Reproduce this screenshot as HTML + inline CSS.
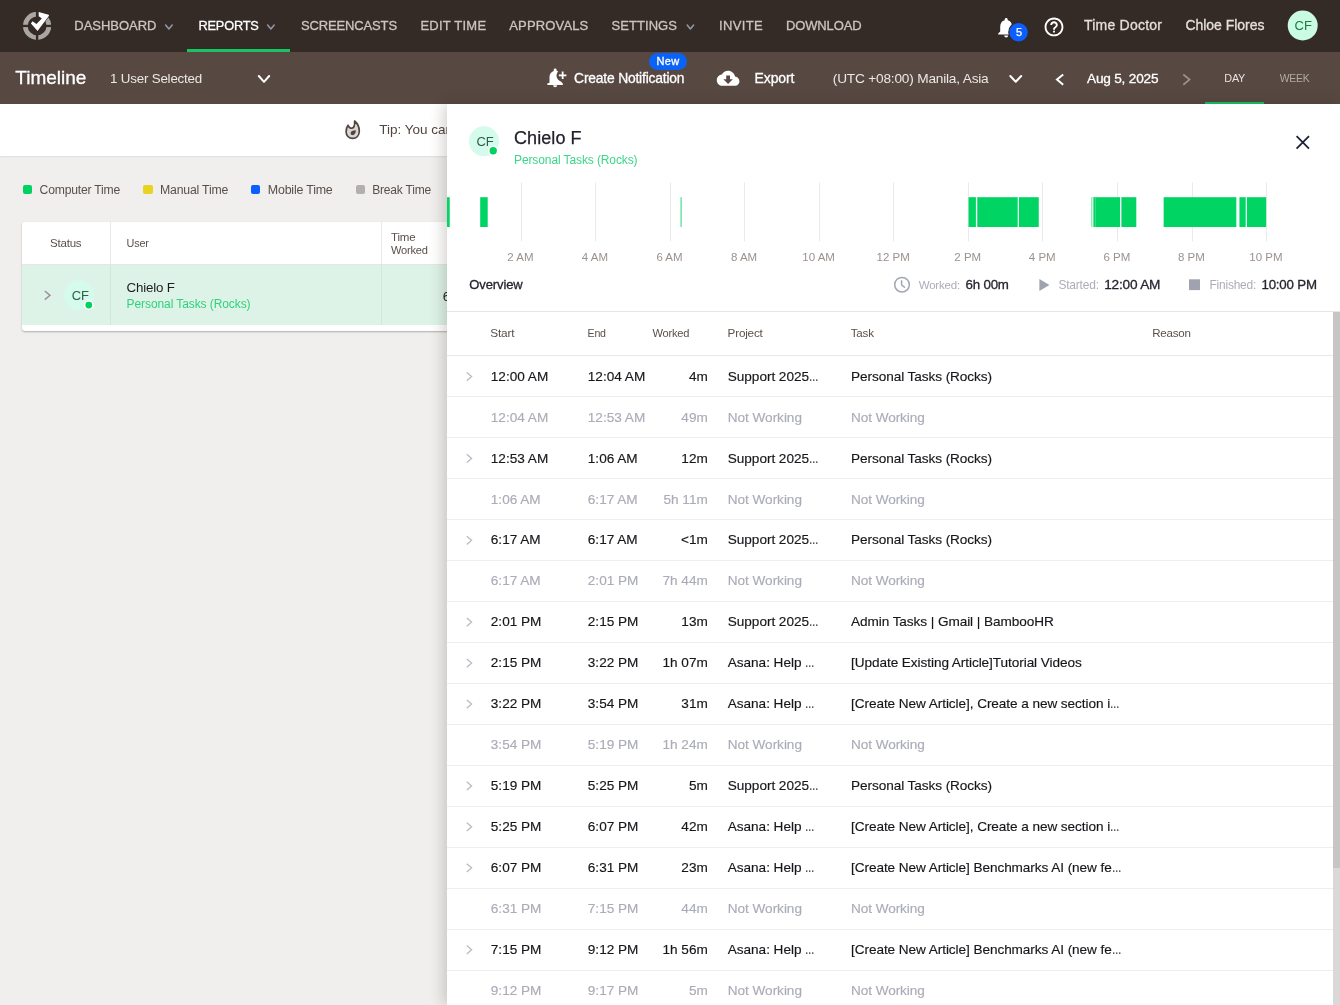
<!DOCTYPE html>
<html><head><meta charset="utf-8"><style>
html,body{margin:0;padding:0}
body{width:1340px;height:1005px;overflow:hidden;position:relative;background:#f0efed;font-family:"Liberation Sans",sans-serif}
#root{position:absolute;left:0;top:0;width:1340px;height:1005px;will-change:transform}
.t{position:absolute;white-space:nowrap}
.el{display:inline-block;transform:scaleX(.7);transform-origin:0 0}
svg{position:absolute;overflow:visible}
</style></head><body><div id="root">
<div style="position:absolute;left:0px;top:0px;width:1340px;height:52px;background:#342a26"></div>
<div style="position:absolute;left:0px;top:52px;width:1340px;height:52px;background:#574842"></div>
<div style="position:absolute;left:0px;top:104px;width:1340px;height:52px;background:#fff;box-shadow:0 1px 1.5px rgba(0,0,0,.07)"></div>
<svg style="left:0;top:0" width="60" height="52" viewBox="0 0 60 52">
<defs><mask id="lm"><rect width="60" height="52" fill="#fff"/>
<rect x="35.9" y="0" width="2.4" height="52" fill="#000"/><rect x="0" y="24.8" width="60" height="2.3" fill="#000"/></mask></defs>
<circle cx="37.1" cy="25.9" r="11.75" fill="none" stroke="#a9a6a4" stroke-width="4.7" mask="url(#lm)"/>
<polygon points="30.92,23.40 32.54,21.25 36.48,23.94 41.85,18.39 38.80,16.24 38.62,11.94 48.65,14.63 49.01,15.70 37.55,31.10" fill="#fff" stroke="#342a26" stroke-width="1.3" paint-order="stroke" stroke-linejoin="round"/>
</svg>
<div class="t" style="left:74.30px;top:19.30px;font-size:13px;line-height:13px;color:#cbc4bf;letter-spacing:-0.032px;-webkit-text-stroke:0.3px currentColor;">DASHBOARD</div>
<div class="t" style="left:198.50px;top:20.30px;font-size:12.77px;line-height:12.77px;color:#ffffff;letter-spacing:-0.200px;-webkit-text-stroke:0.3px currentColor;">REPORTS</div>
<div class="t" style="left:301.10px;top:19.30px;font-size:13px;line-height:13px;color:#cbc4bf;letter-spacing:-0.153px;-webkit-text-stroke:0.3px currentColor;">SCREENCASTS</div>
<div class="t" style="left:420.40px;top:19.30px;font-size:13px;line-height:13px;color:#cbc4bf;letter-spacing:0.237px;-webkit-text-stroke:0.3px currentColor;">EDIT TIME</div>
<div class="t" style="left:509.30px;top:19.30px;font-size:13px;line-height:13px;color:#cbc4bf;letter-spacing:0.151px;-webkit-text-stroke:0.3px currentColor;">APPROVALS</div>
<div class="t" style="left:611.60px;top:19.30px;font-size:13px;line-height:13px;color:#cbc4bf;letter-spacing:0.041px;-webkit-text-stroke:0.3px currentColor;">SETTINGS</div>
<div class="t" style="left:719.10px;top:19.30px;font-size:13px;line-height:13px;color:#cbc4bf;letter-spacing:0.340px;-webkit-text-stroke:0.3px currentColor;">INVITE</div>
<div class="t" style="left:786.00px;top:19.30px;font-size:13px;line-height:13px;color:#cbc4bf;letter-spacing:-0.137px;-webkit-text-stroke:0.3px currentColor;">DOWNLOAD</div>
<svg style="left:0;top:0" width="1" height="1"><polyline points="165.6,25 168.89999999999998,29 172.2,25" fill="none" stroke="#8d96a6" stroke-width="1.6" stroke-linecap="round" stroke-linejoin="round"/></svg>
<svg style="left:0;top:0" width="1" height="1"><polyline points="267.6,25 270.9,29 274.2,25" fill="none" stroke="#8d96a6" stroke-width="1.6" stroke-linecap="round" stroke-linejoin="round"/></svg>
<svg style="left:0;top:0" width="1" height="1"><polyline points="687.2,25 690.4000000000001,29 693.6,25" fill="none" stroke="#8d96a6" stroke-width="1.6" stroke-linecap="round" stroke-linejoin="round"/></svg>
<div style="position:absolute;left:187px;top:49px;width:103px;height:3px;background:#1bc463"></div>
<svg style="left:0;top:0" width="1" height="1"><path transform="translate(994.2,15.5) scale(1.0)" d="M12 22c1.1 0 2-.9 2-2h-4c0 1.1.89 2 2 2zm6-6v-5c0-3.07-1.64-5.64-4.5-6.32V4c0-.83-.67-1.5-1.5-1.5s-1.5.67-1.5 1.5v.68C7.63 5.36 6 7.92 6 11v5l-2 2v1h16v-1l-2-2z" fill="#fff"/>
<circle cx="1018.6" cy="32.2" r="9.8" fill="#0b5ffe" stroke="#342a26" stroke-width="1.2"/></svg>
<div class="t" style="left:1015.90px;top:27.30px;font-size:11px;line-height:11px;color:#fff;-webkit-text-stroke:0.25px #fff;">5</div>
<svg style="left:0;top:0" width="1" height="1"><path transform="translate(1042.72,15.62) scale(0.94)" d="M11 18h2v-2h-2v2zm1-16C6.48 2 2 6.48 2 12s4.48 10 10 10 10-4.48 10-10S17.52 2 12 2zm0 18c-4.41 0-8-3.59-8-8s3.59-8 8-8 8 3.59 8 8-3.59 8-8 8zm0-14c-2.21 0-4 1.79-4 4h2c0-1.1.9-2 2-2s2 .9 2 2c0 2-3 1.75-3 5h2c0-2.25 3-2.5 3-5 0-2.21-1.79-4-4-4z" fill="#fff"/></svg>
<div class="t" style="left:1083.90px;top:18.40px;font-size:14px;line-height:14px;color:#e3dfdc;letter-spacing:0.239px;-webkit-text-stroke:0.3px currentColor;">Time Doctor</div>
<div class="t" style="left:1185.40px;top:18.40px;font-size:14px;line-height:14px;color:#e3dfdc;letter-spacing:-0.024px;-webkit-text-stroke:0.3px currentColor;">Chloe Flores</div>
<svg style="left:0;top:0" width="1" height="1"><circle cx="1302.7" cy="25.5" r="15" fill="#c9fce3"/></svg>
<div class="t" style="left:1294.50px;top:19.40px;font-size:13px;line-height:13px;color:#1d7a43;">CF</div>
<div class="t" style="left:15.30px;top:67.80px;font-size:19px;line-height:19px;color:#ffffff;letter-spacing:-0.014px;-webkit-text-stroke:0.3px currentColor;">Timeline</div>
<div class="t" style="left:110.10px;top:72.20px;font-size:13.35px;line-height:13.35px;color:#ece8e5;letter-spacing:-0.200px;">1 User Selected</div>
<svg style="left:0;top:0" width="1" height="1"><polyline points="258.8,76 264.0,81.8 269.2,76" fill="none" stroke="#ffffff" stroke-width="2" stroke-linecap="round" stroke-linejoin="round"/></svg>
<div style="position:absolute;left:649.1px;top:52.7px;width:38.3px;height:17px;background:#0b62f7;border-radius:9px"></div>
<div class="t" style="left:656.50px;top:56.30px;font-size:11px;line-height:11px;color:#fff;letter-spacing:0.383px;-webkit-text-stroke:0.3px currentColor;">New</div>
<svg style="left:0;top:0" width="1" height="1"><path d="M555.2,68.6 c-0.9,0 -1.5,0.6 -1.5,1.4 l0,0.9 c-2.6,0.8 -4.2,3.2 -4.2,6 l0,5.8 l-2.2,0.7 l0,1.5 l15.5,0 l0,-1.5 l-1.9,-1.9 A6.2,6.2 0 0 1 558.3,71.2 l-1.6,-0.3 l0,-0.9 c0,-0.8 -0.6,-1.4 -1.5,-1.4z M553.1,85.3 h4 a2,2 0 0 1 -4,0z" fill="#fff"/>
<path d="M562.65,71.5 v7.5 M558.9,75.45 h7.5" stroke="#fff" stroke-width="1.8"/></svg>
<div class="t" style="left:574.10px;top:71.90px;font-size:13.87px;line-height:13.87px;color:#ffffff;letter-spacing:-0.200px;-webkit-text-stroke:0.3px currentColor;">Create Notification</div>
<svg style="left:0;top:0" width="1" height="1"><path transform="translate(716.8,67.03) scale(0.942)" d="M19.35 10.04C18.67 6.59 15.64 4 12 4 9.11 4 6.6 5.64 5.35 8.04 2.34 8.36 0 10.91 0 14c0 3.31 2.69 6 6 6h13c2.76 0 5-2.24 5-5 0-2.64-2.05-4.78-4.65-4.96zM17 13l-5 5-5-5h3V9h4v4h3z" fill="#fff"/></svg>
<div class="t" style="left:754.50px;top:70.90px;font-size:14px;line-height:14px;color:#ffffff;letter-spacing:-0.092px;-webkit-text-stroke:0.3px currentColor;">Export</div>
<div class="t" style="left:832.80px;top:72.20px;font-size:13.68px;line-height:13.68px;color:#ece8e5;letter-spacing:-0.200px;">(UTC +08:00) Manila, Asia</div>
<svg style="left:0;top:0" width="1" height="1"><polyline points="1010.3,76 1015.75,81.8 1021.2,76" fill="none" stroke="#ffffff" stroke-width="2" stroke-linecap="round" stroke-linejoin="round"/></svg>
<svg style="left:0;top:0" width="1" height="1"><polyline points="1063.2,74.5 1057,79.6 1063.2,84.7" fill="none" stroke="#fff" stroke-width="2"/><polyline points="1183.3,74.5 1189.5,79.6 1183.3,84.7" fill="none" stroke="#9a918c" stroke-width="1.8"/></svg>
<div class="t" style="left:1087.00px;top:72.30px;font-size:13.63px;line-height:13.63px;color:#ffffff;letter-spacing:-0.200px;-webkit-text-stroke:0.3px currentColor;">Aug 5, 2025</div>
<div class="t" style="left:1224.30px;top:73.30px;font-size:10.8px;line-height:10.8px;color:#e8e3e0;letter-spacing:-0.200px;">DAY</div>
<div class="t" style="left:1279.80px;top:74.30px;font-size:10.36px;line-height:10.36px;color:#b3aaa5;letter-spacing:-0.200px;">WEEK</div>
<div style="position:absolute;left:1205.3px;top:101.5px;width:59px;height:3px;background:#1bc463"></div>
<svg style="left:0;top:0" width="1" height="1"><path d="M348,125.3 C349.2,127.8 350.5,128.4 351.8,128.2 C353.9,127.9 355,126 354.6,121 C357.5,123.5 359.3,127 359.3,131 C359.3,135.5 356.5,138.4 352.6,138.4 C348.8,138.4 346.1,135.5 346.1,131.8 C346.1,129.3 346.8,127 348,125.3 Z" fill="#d9d7d5" stroke="#54443f" stroke-width="1.7" stroke-linejoin="round"/>
<path d="M355.9,130.3 C355.8,133 354.5,135.2 352.6,135.2 C351.3,135.2 350.6,134.3 350.6,133.2 C350.6,131.3 352.6,130.3 355.9,130.3Z" fill="#54443f"/></svg>
<div class="t" style="left:379.30px;top:123.20px;font-size:13.5px;line-height:13.5px;color:#54443f;">Tip: You can</div>
<div style="position:absolute;left:22.5px;top:184.8px;width:9.3px;height:9.3px;background:#00d160;border-radius:2px"></div>
<div class="t" style="left:39.60px;top:183.60px;font-size:12.16px;line-height:12.16px;color:#5b4f4a;letter-spacing:-0.200px;">Computer Time</div>
<div style="position:absolute;left:143.3px;top:184.8px;width:9.3px;height:9.3px;background:#e8d321;border-radius:2px"></div>
<div class="t" style="left:160.10px;top:183.60px;font-size:12.28px;line-height:12.28px;color:#5b4f4a;letter-spacing:-0.200px;">Manual Time</div>
<div style="position:absolute;left:250.7px;top:184.8px;width:9.3px;height:9.3px;background:#0b5ffe;border-radius:2px"></div>
<div class="t" style="left:267.80px;top:183.60px;font-size:12.43px;line-height:12.43px;color:#5b4f4a;letter-spacing:-0.200px;">Mobile Time</div>
<div style="position:absolute;left:355.8px;top:184.8px;width:9.3px;height:9.3px;background:#b3afac;border-radius:2px"></div>
<div class="t" style="left:372.20px;top:183.60px;font-size:12.04px;line-height:12.04px;color:#5b4f4a;letter-spacing:-0.200px;">Break Time</div>
<div style="position:absolute;left:22.2px;top:221.5px;width:460px;height:109.5px;background:#fff;border-radius:3px;box-shadow:0 1px 2px rgba(0,0,0,.28)"></div>
<div style="position:absolute;left:110px;top:221.5px;width:1px;height:103.5px;background:#ebe9e7"></div>
<div style="position:absolute;left:380.6px;top:221.5px;width:1px;height:103.5px;background:#ebe9e7"></div>
<div style="position:absolute;left:22.2px;top:264.3px;width:460px;height:1px;background:#e6e6e6"></div>
<div class="t" style="left:50.00px;top:238.20px;font-size:11.5px;line-height:11.5px;color:#5b4f4a;letter-spacing:-0.200px;">Status</div>
<div class="t" style="left:126.60px;top:238.20px;font-size:10.85px;line-height:10.85px;color:#5b4f4a;letter-spacing:-0.200px;">User</div>
<div class="t" style="left:391.00px;top:231.60px;font-size:11.53px;line-height:11.53px;color:#5b4f4a;letter-spacing:-0.200px;">Time</div>
<div class="t" style="left:391.00px;top:244.70px;font-size:11.09px;line-height:11.09px;color:#5b4f4a;letter-spacing:-0.200px;">Worked</div>
<div style="position:absolute;left:22.2px;top:265px;width:460px;height:60px;background:#def3e7"></div>
<div style="position:absolute;left:110px;top:265px;width:1px;height:60px;background:#d2e6da"></div>
<div style="position:absolute;left:380.6px;top:265px;width:1px;height:60px;background:#d2e6da"></div>
<svg style="left:0;top:0" width="1" height="1"><polyline points="44.8,291 50,295.3 44.8,299.6" fill="none" stroke="#9c92a0" stroke-width="1.5"/><circle cx="79" cy="295.3" r="15" fill="#d4fbeb"/><circle cx="88.8" cy="305.1" r="4.9" fill="#fff"/><circle cx="88.8" cy="305.1" r="3.4" fill="#00d160"/></svg>
<div class="t" style="left:71.70px;top:288.60px;font-size:13px;line-height:13px;color:#2f5e49;">CF</div>
<div class="t" style="left:126.60px;top:281.30px;font-size:13.35px;line-height:13.35px;color:#1d1d21;letter-spacing:-0.200px;">Chielo F</div>
<div class="t" style="left:126.60px;top:298.40px;font-size:12px;line-height:12px;color:#2fd37a;letter-spacing:-0.087px;">Personal Tasks (Rocks)</div>
<div class="t" style="left:442.80px;top:289.50px;font-size:13.5px;line-height:13.5px;color:#1d1d21;">6</div>
<div style="position:absolute;left:447px;top:104px;width:893px;height:901px;background:#fff;box-shadow:-3px 0 14px rgba(40,30,25,.22)"></div>
<svg style="left:0;top:0" width="1" height="1"><circle cx="484" cy="141.3" r="15" fill="#d4fbeb"/><circle cx="493.2" cy="150.8" r="5.3" fill="#fff"/><circle cx="493.2" cy="150.8" r="3.7" fill="#00d160"/></svg>
<div class="t" style="left:476.40px;top:134.60px;font-size:13px;line-height:13px;color:#2f5e49;">CF</div>
<div class="t" style="left:514.00px;top:128.70px;font-size:18px;line-height:18px;color:#22222e;letter-spacing:0.081px;-webkit-text-stroke:0.25px currentColor;">Chielo F</div>
<div class="t" style="left:514.00px;top:153.50px;font-size:12px;line-height:12px;color:#3dd68a;letter-spacing:-0.106px;">Personal Tasks (Rocks)</div>
<svg style="left:0;top:0" width="1" height="1"><path d="M1296.6,136.2 L1309,148.6 M1309,136.2 L1296.6,148.6" stroke="#1c2033" stroke-width="1.75"/></svg>
<svg style="left:0;top:0" width="1" height="1"><line x1="521.5" y1="182.4" x2="521.5" y2="241.4" stroke="#ebebeb" stroke-width="1"/><line x1="595.5" y1="182.4" x2="595.5" y2="241.4" stroke="#ebebeb" stroke-width="1"/><line x1="670.5" y1="182.4" x2="670.5" y2="241.4" stroke="#ebebeb" stroke-width="1"/><line x1="744.5" y1="182.4" x2="744.5" y2="241.4" stroke="#ebebeb" stroke-width="1"/><line x1="819.5" y1="182.4" x2="819.5" y2="241.4" stroke="#ebebeb" stroke-width="1"/><line x1="893.5" y1="182.4" x2="893.5" y2="241.4" stroke="#ebebeb" stroke-width="1"/><line x1="968.5" y1="182.4" x2="968.5" y2="241.4" stroke="#ebebeb" stroke-width="1"/><line x1="1042.5" y1="182.4" x2="1042.5" y2="241.4" stroke="#ebebeb" stroke-width="1"/><line x1="1117.5" y1="182.4" x2="1117.5" y2="241.4" stroke="#ebebeb" stroke-width="1"/><line x1="1192.5" y1="182.4" x2="1192.5" y2="241.4" stroke="#ebebeb" stroke-width="1"/><line x1="1266.5" y1="182.4" x2="1266.5" y2="241.4" stroke="#ebebeb" stroke-width="1"/><rect x="447.00" y="197.2" width="2.70" height="29.8" fill="#00d564"/><rect x="480.20" y="197.2" width="7.50" height="29.8" fill="#00d564"/><rect x="968.54" y="197.2" width="8.70" height="29.8" fill="#00d564"/><rect x="977.24" y="197.2" width="41.63" height="29.8" fill="#00d564"/><rect x="1018.87" y="197.2" width="19.88" height="29.8" fill="#00d564"/><rect x="1091.57" y="197.2" width="3.73" height="29.8" fill="#00d564"/><rect x="1095.29" y="197.2" width="26.10" height="29.8" fill="#00d564"/><rect x="1121.39" y="197.2" width="14.91" height="29.8" fill="#00d564"/><rect x="1163.64" y="197.2" width="72.70" height="29.8" fill="#00d564"/><rect x="1239.44" y="197.2" width="7.46" height="29.8" fill="#00d564"/><rect x="1246.90" y="197.2" width="19.26" height="29.8" fill="#00d564"/><rect x="975.90" y="197.2" width="1.2" height="29.8" fill="#fff"/><rect x="1017.70" y="197.2" width="1.2" height="29.8" fill="#fff"/><rect x="1092.20" y="197.2" width="1.2" height="29.8" fill="#fff"/><rect x="1120.00" y="197.2" width="1.2" height="29.8" fill="#fff"/><rect x="1245.70" y="197.2" width="1.2" height="29.8" fill="#fff"/><rect x="680.3" y="197.2" width="1.7" height="29.8" fill="#7fe8b0"/></svg>
<div class="t" style="left:507.26px;top:252.00px;font-size:11.5px;line-height:11.5px;color:#9b928d;">2 AM</div>
<div class="t" style="left:581.82px;top:252.00px;font-size:11.5px;line-height:11.5px;color:#9b928d;">4 AM</div>
<div class="t" style="left:656.38px;top:252.00px;font-size:11.5px;line-height:11.5px;color:#9b928d;">6 AM</div>
<div class="t" style="left:730.94px;top:252.00px;font-size:11.5px;line-height:11.5px;color:#9b928d;">8 AM</div>
<div class="t" style="left:802.30px;top:252.00px;font-size:11.5px;line-height:11.5px;color:#9b928d;">10 AM</div>
<div class="t" style="left:876.54px;top:252.00px;font-size:11.5px;line-height:11.5px;color:#9b928d;">12 PM</div>
<div class="t" style="left:954.30px;top:252.00px;font-size:11.5px;line-height:11.5px;color:#9b928d;">2 PM</div>
<div class="t" style="left:1028.86px;top:252.00px;font-size:11.5px;line-height:11.5px;color:#9b928d;">4 PM</div>
<div class="t" style="left:1103.42px;top:252.00px;font-size:11.5px;line-height:11.5px;color:#9b928d;">6 PM</div>
<div class="t" style="left:1177.98px;top:252.00px;font-size:11.5px;line-height:11.5px;color:#9b928d;">8 PM</div>
<div class="t" style="left:1249.34px;top:252.00px;font-size:11.5px;line-height:11.5px;color:#9b928d;">10 PM</div>
<div class="t" style="left:469.30px;top:278.30px;font-size:13px;line-height:13px;color:#25252d;letter-spacing:-0.116px;-webkit-text-stroke:0.3px currentColor;">Overview</div>
<svg style="left:0;top:0" width="1" height="1"><circle cx="902" cy="284.7" r="7.3" fill="none" stroke="#a3a6b2" stroke-width="1.5"/>
<polyline points="901.6,280.2 901.6,285 905,287.6" fill="none" stroke="#a3a6b2" stroke-width="1.5"/>
<polygon points="1039.4,279 1049.4,285 1039.4,291" fill="#a0a2b0"/>
<rect x="1189" y="279.3" width="11" height="10.8" fill="#a0a2b0"/></svg>
<div class="t" style="left:918.70px;top:279.80px;font-size:11.52px;line-height:11.52px;color:#abadb9;letter-spacing:-0.200px;">Worked:</div>
<div class="t" style="left:965.60px;top:278.20px;font-size:13.31px;line-height:13.31px;color:#25252f;letter-spacing:-0.200px;-webkit-text-stroke:0.3px currentColor;">6h 00m</div>
<div class="t" style="left:1058.40px;top:279.40px;font-size:11.99px;line-height:11.99px;color:#abadb9;letter-spacing:-0.200px;">Started:</div>
<div class="t" style="left:1104.20px;top:278.20px;font-size:13.66px;line-height:13.66px;color:#25252f;letter-spacing:-0.200px;-webkit-text-stroke:0.3px currentColor;">12:00 AM</div>
<div class="t" style="left:1209.50px;top:279.80px;font-size:11.93px;line-height:11.93px;color:#abadb9;letter-spacing:-0.200px;">Finished:</div>
<div class="t" style="left:1261.50px;top:278.20px;font-size:13.29px;line-height:13.29px;color:#25252f;letter-spacing:-0.200px;-webkit-text-stroke:0.3px currentColor;">10:00 PM</div>
<div style="position:absolute;left:447px;top:311px;width:893px;height:1px;background:#e6e6e6"></div>
<div class="t" style="left:490.30px;top:327.60px;font-size:11.84px;line-height:11.84px;color:#5b4f4a;letter-spacing:-0.200px;">Start</div>
<div class="t" style="left:587.50px;top:327.60px;font-size:10.62px;line-height:10.62px;color:#5b4f4a;letter-spacing:-0.200px;">End</div>
<div class="t" style="left:652.40px;top:327.60px;font-size:11.09px;line-height:11.09px;color:#5b4f4a;letter-spacing:-0.200px;">Worked</div>
<div class="t" style="left:727.60px;top:326.60px;font-size:11.7px;line-height:11.7px;color:#5b4f4a;letter-spacing:-0.200px;">Project</div>
<div class="t" style="left:850.80px;top:327.60px;font-size:11.56px;line-height:11.56px;color:#5b4f4a;letter-spacing:-0.200px;">Task</div>
<div class="t" style="left:1152.20px;top:327.60px;font-size:11.55px;line-height:11.55px;color:#5b4f4a;letter-spacing:-0.200px;">Reason</div>
<div style="position:absolute;left:447px;top:355px;width:886px;height:1px;background:#e8e8e8"></div>
<div class="t" style="left:490.80px;top:369.70px;font-size:13.6px;line-height:13.6px;color:#16161b;-webkit-text-stroke:0.15px currentColor;">12:00 AM</div>
<div class="t" style="left:587.80px;top:369.70px;font-size:13.6px;line-height:13.6px;color:#16161b;-webkit-text-stroke:0.15px currentColor;">12:04 AM</div>
<div class="t" style="left:688.91px;top:369.70px;font-size:13.6px;line-height:13.6px;color:#16161b;-webkit-text-stroke:0.15px currentColor;">4m</div>
<div class="t" style="left:727.80px;top:369.70px;font-size:13.6px;line-height:13.6px;color:#16161b;letter-spacing:-0.040px;-webkit-text-stroke:0.15px currentColor;">Support 2025<span class="el">…</span></div>
<div class="t" style="left:851.00px;top:369.70px;font-size:13.6px;line-height:13.6px;color:#16161b;letter-spacing:-0.070px;-webkit-text-stroke:0.15px currentColor;">Personal Tasks (Rocks)</div>
<div style="position:absolute;left:447px;top:396px;width:886px;height:1px;background:#eeeeee"></div>
<div class="t" style="left:490.80px;top:410.64px;font-size:13.6px;line-height:13.6px;color:#aaacb8;-webkit-text-stroke:0.15px currentColor;">12:04 AM</div>
<div class="t" style="left:587.80px;top:410.64px;font-size:13.6px;line-height:13.6px;color:#aaacb8;-webkit-text-stroke:0.15px currentColor;">12:53 AM</div>
<div class="t" style="left:681.35px;top:410.64px;font-size:13.6px;line-height:13.6px;color:#aaacb8;-webkit-text-stroke:0.15px currentColor;">49m</div>
<div class="t" style="left:727.80px;top:410.64px;font-size:13.6px;line-height:13.6px;color:#aaacb8;letter-spacing:-0.040px;-webkit-text-stroke:0.15px currentColor;">Not Working</div>
<div class="t" style="left:851.00px;top:410.64px;font-size:13.6px;line-height:13.6px;color:#aaacb8;letter-spacing:-0.070px;-webkit-text-stroke:0.15px currentColor;">Not Working</div>
<div style="position:absolute;left:447px;top:437px;width:886px;height:1px;background:#eeeeee"></div>
<div class="t" style="left:490.80px;top:451.58px;font-size:13.6px;line-height:13.6px;color:#16161b;-webkit-text-stroke:0.15px currentColor;">12:53 AM</div>
<div class="t" style="left:587.80px;top:451.58px;font-size:13.6px;line-height:13.6px;color:#16161b;-webkit-text-stroke:0.15px currentColor;">1:06 AM</div>
<div class="t" style="left:681.35px;top:451.58px;font-size:13.6px;line-height:13.6px;color:#16161b;-webkit-text-stroke:0.15px currentColor;">12m</div>
<div class="t" style="left:727.80px;top:451.58px;font-size:13.6px;line-height:13.6px;color:#16161b;letter-spacing:-0.040px;-webkit-text-stroke:0.15px currentColor;">Support 2025<span class="el">…</span></div>
<div class="t" style="left:851.00px;top:451.58px;font-size:13.6px;line-height:13.6px;color:#16161b;letter-spacing:-0.070px;-webkit-text-stroke:0.15px currentColor;">Personal Tasks (Rocks)</div>
<div style="position:absolute;left:447px;top:478px;width:886px;height:1px;background:#eeeeee"></div>
<div class="t" style="left:490.80px;top:492.52px;font-size:13.6px;line-height:13.6px;color:#aaacb8;-webkit-text-stroke:0.15px currentColor;">1:06 AM</div>
<div class="t" style="left:587.80px;top:492.52px;font-size:13.6px;line-height:13.6px;color:#aaacb8;-webkit-text-stroke:0.15px currentColor;">6:17 AM</div>
<div class="t" style="left:663.45px;top:492.52px;font-size:13.6px;line-height:13.6px;color:#aaacb8;-webkit-text-stroke:0.15px currentColor;">5h 11m</div>
<div class="t" style="left:727.80px;top:492.52px;font-size:13.6px;line-height:13.6px;color:#aaacb8;letter-spacing:-0.040px;-webkit-text-stroke:0.15px currentColor;">Not Working</div>
<div class="t" style="left:851.00px;top:492.52px;font-size:13.6px;line-height:13.6px;color:#aaacb8;letter-spacing:-0.070px;-webkit-text-stroke:0.15px currentColor;">Not Working</div>
<div style="position:absolute;left:447px;top:519px;width:886px;height:1px;background:#eeeeee"></div>
<div class="t" style="left:490.80px;top:533.46px;font-size:13.6px;line-height:13.6px;color:#16161b;-webkit-text-stroke:0.15px currentColor;">6:17 AM</div>
<div class="t" style="left:587.80px;top:533.46px;font-size:13.6px;line-height:13.6px;color:#16161b;-webkit-text-stroke:0.15px currentColor;">6:17 AM</div>
<div class="t" style="left:680.97px;top:533.46px;font-size:13.6px;line-height:13.6px;color:#16161b;-webkit-text-stroke:0.15px currentColor;">&lt;1m</div>
<div class="t" style="left:727.80px;top:533.46px;font-size:13.6px;line-height:13.6px;color:#16161b;letter-spacing:-0.040px;-webkit-text-stroke:0.15px currentColor;">Support 2025<span class="el">…</span></div>
<div class="t" style="left:851.00px;top:533.46px;font-size:13.6px;line-height:13.6px;color:#16161b;letter-spacing:-0.070px;-webkit-text-stroke:0.15px currentColor;">Personal Tasks (Rocks)</div>
<div style="position:absolute;left:447px;top:560px;width:886px;height:1px;background:#eeeeee"></div>
<div class="t" style="left:490.80px;top:574.40px;font-size:13.6px;line-height:13.6px;color:#aaacb8;-webkit-text-stroke:0.15px currentColor;">6:17 AM</div>
<div class="t" style="left:587.80px;top:574.40px;font-size:13.6px;line-height:13.6px;color:#aaacb8;-webkit-text-stroke:0.15px currentColor;">2:01 PM</div>
<div class="t" style="left:662.44px;top:574.40px;font-size:13.6px;line-height:13.6px;color:#aaacb8;-webkit-text-stroke:0.15px currentColor;">7h 44m</div>
<div class="t" style="left:727.80px;top:574.40px;font-size:13.6px;line-height:13.6px;color:#aaacb8;letter-spacing:-0.040px;-webkit-text-stroke:0.15px currentColor;">Not Working</div>
<div class="t" style="left:851.00px;top:574.40px;font-size:13.6px;line-height:13.6px;color:#aaacb8;letter-spacing:-0.070px;-webkit-text-stroke:0.15px currentColor;">Not Working</div>
<div style="position:absolute;left:447px;top:601px;width:886px;height:1px;background:#eeeeee"></div>
<div class="t" style="left:490.80px;top:615.34px;font-size:13.6px;line-height:13.6px;color:#16161b;-webkit-text-stroke:0.15px currentColor;">2:01 PM</div>
<div class="t" style="left:587.80px;top:615.34px;font-size:13.6px;line-height:13.6px;color:#16161b;-webkit-text-stroke:0.15px currentColor;">2:15 PM</div>
<div class="t" style="left:681.35px;top:615.34px;font-size:13.6px;line-height:13.6px;color:#16161b;-webkit-text-stroke:0.15px currentColor;">13m</div>
<div class="t" style="left:727.80px;top:615.34px;font-size:13.6px;line-height:13.6px;color:#16161b;letter-spacing:-0.040px;-webkit-text-stroke:0.15px currentColor;">Support 2025<span class="el">…</span></div>
<div class="t" style="left:851.00px;top:615.34px;font-size:13.6px;line-height:13.6px;color:#16161b;letter-spacing:-0.070px;-webkit-text-stroke:0.15px currentColor;">Admin Tasks | Gmail | BambooHR</div>
<div style="position:absolute;left:447px;top:642px;width:886px;height:1px;background:#eeeeee"></div>
<div class="t" style="left:490.80px;top:656.28px;font-size:13.6px;line-height:13.6px;color:#16161b;-webkit-text-stroke:0.15px currentColor;">2:15 PM</div>
<div class="t" style="left:587.80px;top:656.28px;font-size:13.6px;line-height:13.6px;color:#16161b;-webkit-text-stroke:0.15px currentColor;">3:22 PM</div>
<div class="t" style="left:662.44px;top:656.28px;font-size:13.6px;line-height:13.6px;color:#16161b;-webkit-text-stroke:0.15px currentColor;">1h 07m</div>
<div class="t" style="left:727.80px;top:656.28px;font-size:13.6px;line-height:13.6px;color:#16161b;letter-spacing:-0.040px;-webkit-text-stroke:0.15px currentColor;">Asana: Help <span class="el">…</span></div>
<div class="t" style="left:851.00px;top:656.28px;font-size:13.6px;line-height:13.6px;color:#16161b;letter-spacing:-0.070px;-webkit-text-stroke:0.15px currentColor;">[Update Existing Article]Tutorial Videos</div>
<div style="position:absolute;left:447px;top:683px;width:886px;height:1px;background:#eeeeee"></div>
<div class="t" style="left:490.80px;top:697.22px;font-size:13.6px;line-height:13.6px;color:#16161b;-webkit-text-stroke:0.15px currentColor;">3:22 PM</div>
<div class="t" style="left:587.80px;top:697.22px;font-size:13.6px;line-height:13.6px;color:#16161b;-webkit-text-stroke:0.15px currentColor;">3:54 PM</div>
<div class="t" style="left:681.35px;top:697.22px;font-size:13.6px;line-height:13.6px;color:#16161b;-webkit-text-stroke:0.15px currentColor;">31m</div>
<div class="t" style="left:727.80px;top:697.22px;font-size:13.6px;line-height:13.6px;color:#16161b;letter-spacing:-0.040px;-webkit-text-stroke:0.15px currentColor;">Asana: Help <span class="el">…</span></div>
<div class="t" style="left:851.00px;top:697.22px;font-size:13.6px;line-height:13.6px;color:#16161b;letter-spacing:-0.070px;-webkit-text-stroke:0.15px currentColor;">[Create New Article], Create a new section i<span class="el">…</span></div>
<div style="position:absolute;left:447px;top:724px;width:886px;height:1px;background:#eeeeee"></div>
<div class="t" style="left:490.80px;top:738.16px;font-size:13.6px;line-height:13.6px;color:#aaacb8;-webkit-text-stroke:0.15px currentColor;">3:54 PM</div>
<div class="t" style="left:587.80px;top:738.16px;font-size:13.6px;line-height:13.6px;color:#aaacb8;-webkit-text-stroke:0.15px currentColor;">5:19 PM</div>
<div class="t" style="left:662.44px;top:738.16px;font-size:13.6px;line-height:13.6px;color:#aaacb8;-webkit-text-stroke:0.15px currentColor;">1h 24m</div>
<div class="t" style="left:727.80px;top:738.16px;font-size:13.6px;line-height:13.6px;color:#aaacb8;letter-spacing:-0.040px;-webkit-text-stroke:0.15px currentColor;">Not Working</div>
<div class="t" style="left:851.00px;top:738.16px;font-size:13.6px;line-height:13.6px;color:#aaacb8;letter-spacing:-0.070px;-webkit-text-stroke:0.15px currentColor;">Not Working</div>
<div style="position:absolute;left:447px;top:765px;width:886px;height:1px;background:#eeeeee"></div>
<div class="t" style="left:490.80px;top:779.10px;font-size:13.6px;line-height:13.6px;color:#16161b;-webkit-text-stroke:0.15px currentColor;">5:19 PM</div>
<div class="t" style="left:587.80px;top:779.10px;font-size:13.6px;line-height:13.6px;color:#16161b;-webkit-text-stroke:0.15px currentColor;">5:25 PM</div>
<div class="t" style="left:688.91px;top:779.10px;font-size:13.6px;line-height:13.6px;color:#16161b;-webkit-text-stroke:0.15px currentColor;">5m</div>
<div class="t" style="left:727.80px;top:779.10px;font-size:13.6px;line-height:13.6px;color:#16161b;letter-spacing:-0.040px;-webkit-text-stroke:0.15px currentColor;">Support 2025<span class="el">…</span></div>
<div class="t" style="left:851.00px;top:779.10px;font-size:13.6px;line-height:13.6px;color:#16161b;letter-spacing:-0.070px;-webkit-text-stroke:0.15px currentColor;">Personal Tasks (Rocks)</div>
<div style="position:absolute;left:447px;top:806px;width:886px;height:1px;background:#eeeeee"></div>
<div class="t" style="left:490.80px;top:820.04px;font-size:13.6px;line-height:13.6px;color:#16161b;-webkit-text-stroke:0.15px currentColor;">5:25 PM</div>
<div class="t" style="left:587.80px;top:820.04px;font-size:13.6px;line-height:13.6px;color:#16161b;-webkit-text-stroke:0.15px currentColor;">6:07 PM</div>
<div class="t" style="left:681.35px;top:820.04px;font-size:13.6px;line-height:13.6px;color:#16161b;-webkit-text-stroke:0.15px currentColor;">42m</div>
<div class="t" style="left:727.80px;top:820.04px;font-size:13.6px;line-height:13.6px;color:#16161b;letter-spacing:-0.040px;-webkit-text-stroke:0.15px currentColor;">Asana: Help <span class="el">…</span></div>
<div class="t" style="left:851.00px;top:820.04px;font-size:13.6px;line-height:13.6px;color:#16161b;letter-spacing:-0.070px;-webkit-text-stroke:0.15px currentColor;">[Create New Article], Create a new section i<span class="el">…</span></div>
<div style="position:absolute;left:447px;top:847px;width:886px;height:1px;background:#eeeeee"></div>
<div class="t" style="left:490.80px;top:860.98px;font-size:13.6px;line-height:13.6px;color:#16161b;-webkit-text-stroke:0.15px currentColor;">6:07 PM</div>
<div class="t" style="left:587.80px;top:860.98px;font-size:13.6px;line-height:13.6px;color:#16161b;-webkit-text-stroke:0.15px currentColor;">6:31 PM</div>
<div class="t" style="left:681.35px;top:860.98px;font-size:13.6px;line-height:13.6px;color:#16161b;-webkit-text-stroke:0.15px currentColor;">23m</div>
<div class="t" style="left:727.80px;top:860.98px;font-size:13.6px;line-height:13.6px;color:#16161b;letter-spacing:-0.040px;-webkit-text-stroke:0.15px currentColor;">Asana: Help <span class="el">…</span></div>
<div class="t" style="left:851.00px;top:860.98px;font-size:13.6px;line-height:13.6px;color:#16161b;letter-spacing:-0.070px;-webkit-text-stroke:0.15px currentColor;">[Create New Article] Benchmarks AI (new fe<span class="el">…</span></div>
<div style="position:absolute;left:447px;top:888px;width:886px;height:1px;background:#eeeeee"></div>
<div class="t" style="left:490.80px;top:901.92px;font-size:13.6px;line-height:13.6px;color:#aaacb8;-webkit-text-stroke:0.15px currentColor;">6:31 PM</div>
<div class="t" style="left:587.80px;top:901.92px;font-size:13.6px;line-height:13.6px;color:#aaacb8;-webkit-text-stroke:0.15px currentColor;">7:15 PM</div>
<div class="t" style="left:681.35px;top:901.92px;font-size:13.6px;line-height:13.6px;color:#aaacb8;-webkit-text-stroke:0.15px currentColor;">44m</div>
<div class="t" style="left:727.80px;top:901.92px;font-size:13.6px;line-height:13.6px;color:#aaacb8;letter-spacing:-0.040px;-webkit-text-stroke:0.15px currentColor;">Not Working</div>
<div class="t" style="left:851.00px;top:901.92px;font-size:13.6px;line-height:13.6px;color:#aaacb8;letter-spacing:-0.070px;-webkit-text-stroke:0.15px currentColor;">Not Working</div>
<div style="position:absolute;left:447px;top:929px;width:886px;height:1px;background:#eeeeee"></div>
<div class="t" style="left:490.80px;top:942.86px;font-size:13.6px;line-height:13.6px;color:#16161b;-webkit-text-stroke:0.15px currentColor;">7:15 PM</div>
<div class="t" style="left:587.80px;top:942.86px;font-size:13.6px;line-height:13.6px;color:#16161b;-webkit-text-stroke:0.15px currentColor;">9:12 PM</div>
<div class="t" style="left:662.44px;top:942.86px;font-size:13.6px;line-height:13.6px;color:#16161b;-webkit-text-stroke:0.15px currentColor;">1h 56m</div>
<div class="t" style="left:727.80px;top:942.86px;font-size:13.6px;line-height:13.6px;color:#16161b;letter-spacing:-0.040px;-webkit-text-stroke:0.15px currentColor;">Asana: Help <span class="el">…</span></div>
<div class="t" style="left:851.00px;top:942.86px;font-size:13.6px;line-height:13.6px;color:#16161b;letter-spacing:-0.070px;-webkit-text-stroke:0.15px currentColor;">[Create New Article] Benchmarks AI (new fe<span class="el">…</span></div>
<div style="position:absolute;left:447px;top:970px;width:886px;height:1px;background:#eeeeee"></div>
<div class="t" style="left:490.80px;top:983.80px;font-size:13.6px;line-height:13.6px;color:#aaacb8;-webkit-text-stroke:0.15px currentColor;">9:12 PM</div>
<div class="t" style="left:587.80px;top:983.80px;font-size:13.6px;line-height:13.6px;color:#aaacb8;-webkit-text-stroke:0.15px currentColor;">9:17 PM</div>
<div class="t" style="left:688.91px;top:983.80px;font-size:13.6px;line-height:13.6px;color:#aaacb8;-webkit-text-stroke:0.15px currentColor;">5m</div>
<div class="t" style="left:727.80px;top:983.80px;font-size:13.6px;line-height:13.6px;color:#aaacb8;letter-spacing:-0.040px;-webkit-text-stroke:0.15px currentColor;">Not Working</div>
<div class="t" style="left:851.00px;top:983.80px;font-size:13.6px;line-height:13.6px;color:#aaacb8;letter-spacing:-0.070px;-webkit-text-stroke:0.15px currentColor;">Not Working</div>
<div style="position:absolute;left:447px;top:1011px;width:886px;height:1px;background:#eeeeee"></div>
<svg style="left:0;top:0" width="1" height="1"><polyline points="466.8,372.4 471.6,376.5 466.8,380.7" fill="none" stroke="#b9bcc6" stroke-width="1.3"/><polyline points="466.8,454.3 471.6,458.4 466.8,462.6" fill="none" stroke="#b9bcc6" stroke-width="1.3"/><polyline points="466.8,536.2 471.6,540.3 466.8,544.5" fill="none" stroke="#b9bcc6" stroke-width="1.3"/><polyline points="466.8,618.0 471.6,622.1 466.8,626.3" fill="none" stroke="#b9bcc6" stroke-width="1.3"/><polyline points="466.8,659.0 471.6,663.1 466.8,667.3" fill="none" stroke="#b9bcc6" stroke-width="1.3"/><polyline points="466.8,699.9 471.6,704.0 466.8,708.2" fill="none" stroke="#b9bcc6" stroke-width="1.3"/><polyline points="466.8,781.8 471.6,785.9 466.8,790.1" fill="none" stroke="#b9bcc6" stroke-width="1.3"/><polyline points="466.8,822.7 471.6,826.8 466.8,831.0" fill="none" stroke="#b9bcc6" stroke-width="1.3"/><polyline points="466.8,863.7 471.6,867.8 466.8,872.0" fill="none" stroke="#b9bcc6" stroke-width="1.3"/><polyline points="466.8,945.6 471.6,949.7 466.8,953.9" fill="none" stroke="#b9bcc6" stroke-width="1.3"/></svg>
<div style="position:absolute;left:1333px;top:311.5px;width:7px;height:556.5px;background:#c8c6c4"></div>
<div style="position:absolute;left:1333px;top:868px;width:7px;height:137px;background:#dbd9d7"></div>
</div></body></html>
